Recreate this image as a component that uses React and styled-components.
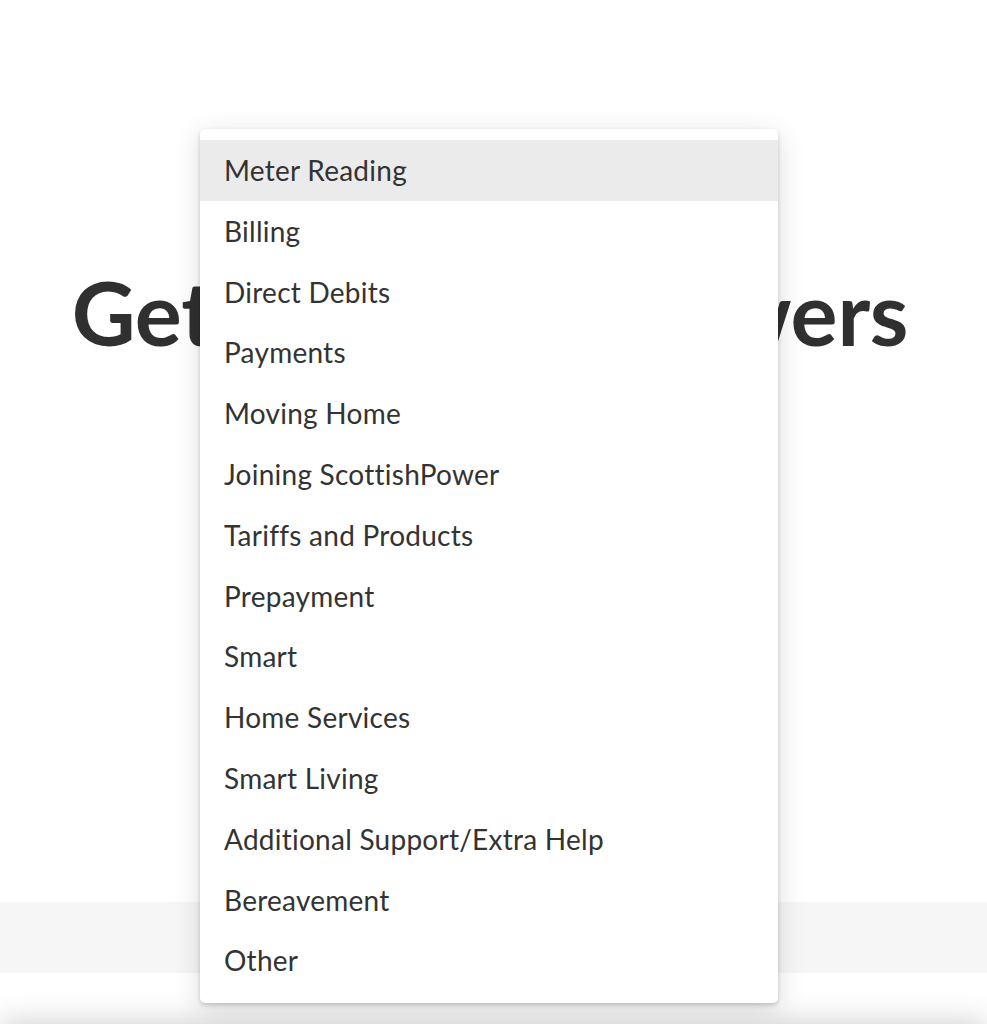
import React from 'react';
import styled, { createGlobalStyle } from 'styled-components';

const GlobalStyle = createGlobalStyle`
  html, body {
    margin: 0;
    padding: 0;
    background: #ffffff;
    font-family: Lato, "Open Sans", sans-serif;
    color: #333333;
    overflow: hidden;
    font-variant-ligatures: none;
  }
`

const Page = styled.div`
  position: relative;
  min-height: 1024px;
`

const Hero = styled.section`
  height: 902px;
  padding-top: 259px;
  box-sizing: border-box;
  text-align: center;
`

const Title = styled.h1`
  margin: 0 0 0 -7px;
  font-size: 88px;
  line-height: 106px;
  font-weight: 700;
  letter-spacing: -0.2px;
  color: #303030;
`

const Band = styled.div`
  height: 71px;
  background: #f6f6f6;
`

const Footer = styled.div`
  margin-top: 56px;
  height: 200px;
  background: #ffffff;
  box-shadow: 0 -6px 30px rgba(0, 0, 0, 0.2);
`

const Menu = styled.ul`
  position: absolute;
  top: 129px;
  left: 200px;
  width: 578px;
  margin: 0;
  padding: 11px 0 12px;
  list-style: none;
  background: #ffffff;
  border-radius: 5px;
  box-shadow: 0 2px 4px rgba(0, 0, 0, 0.18), 0 6px 28px rgba(0, 0, 0, 0.14);
`

const Option = styled.li`
  height: 60.8px;
  line-height: 60.8px;
  padding-left: 24px;
  font-size: 28px;
  letter-spacing: 0.25px;
  color: #333333;
  background: ${p => (p.active ? '#ebebeb' : 'transparent')};
  white-space: nowrap;
`

const options = [
  'Meter Reading',
  'Billing',
  'Direct Debits',
  'Payments',
  'Moving Home',
  'Joining ScottishPower',
  'Tariffs and Products',
  'Prepayment',
  'Smart',
  'Home Services',
  'Smart Living',
  'Additional Support/Extra Help',
  'Bereavement',
  'Other',
]

const App = () => (
  <Page>
    <GlobalStyle />
    <Hero>
      <Title>Get help and answers</Title>
    </Hero>
    <Band />
    <Footer />
    <Menu>
      {options.map((o, i) => (
        <Option key={o} active={i === 0}>{o}</Option>
      ))}
    </Menu>
  </Page>
)

export default App;
